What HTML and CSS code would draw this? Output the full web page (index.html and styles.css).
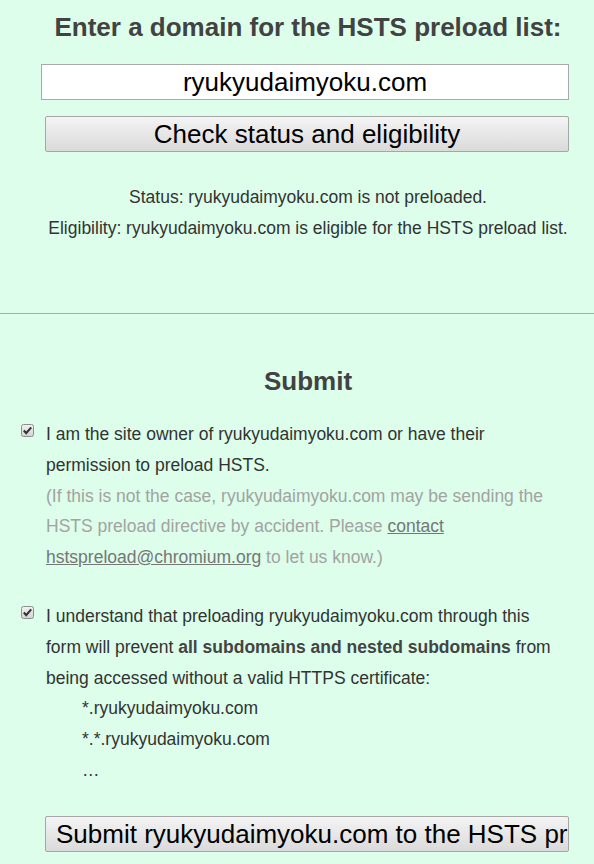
FILE: index.html
```html
<!DOCTYPE html>
<html lang="en">
<head>
<meta charset="utf-8">
<title>HSTS Preload List Submission</title>
<link rel="stylesheet" href="styles.css">
</head>
<body>
  <section class="check">
    <h1 class="title">Enter a domain for the HSTS preload list:</h1>
    <form class="check-form">
      <input class="domain-input" type="text" value="ryukyudaimyoku.com">
      <button class="btn btn-check" type="button">Check status and eligibility</button>
    </form>
    <div class="result">
      <div>Status: ryukyudaimyoku.com is not preloaded.</div>
      <div>Eligibility: ryukyudaimyoku.com is eligible for the HSTS preload list.</div>
    </div>
  </section>

  <hr class="divider">

  <section class="submit">
    <h2 class="title submit-title">Submit</h2>

    <label class="ack">
      <span class="checkbox" role="checkbox" aria-checked="true">
        <svg width="13" height="13" viewBox="0 0 13 13"><defs><linearGradient id="cb1" x1="0" y1="0" x2="0" y2="1"><stop offset="0" stop-color="#f2f2f2"/><stop offset="1" stop-color="#d2d2d2"/></linearGradient></defs><rect x="0.5" y="0.5" width="12" height="12" rx="2" fill="url(#cb1)" stroke="#8e8e8e"/><path d="M2.8 6.6 L5.2 9.1 L10.2 3.4" fill="none" stroke="#333" stroke-width="2.1"/></svg>
      </span>
      <span class="ack-text">I am the site owner of ryukyudaimyoku.com or have their permission to preload HSTS.<br><span class="muted">(If this is not the case, ryukyudaimyoku.com may be sending the HSTS preload directive by accident. Please <a href="#">contact hstspreload@chromium.org</a> to let us know.)</span></span>
    </label>

    <label class="ack ack-second">
      <span class="checkbox" role="checkbox" aria-checked="true">
        <svg width="13" height="13" viewBox="0 0 13 13"><defs><linearGradient id="cb2" x1="0" y1="0" x2="0" y2="1"><stop offset="0" stop-color="#f2f2f2"/><stop offset="1" stop-color="#d2d2d2"/></linearGradient></defs><rect x="0.5" y="0.5" width="12" height="12" rx="2" fill="url(#cb2)" stroke="#8e8e8e"/><path d="M2.8 6.6 L5.2 9.1 L10.2 3.4" fill="none" stroke="#333" stroke-width="2.1"/></svg>
      </span>
      <span class="ack-text">I understand that preloading ryukyudaimyoku.com through this form will prevent <strong class="strong">all subdomains and nested subdomains</strong> from being accessed without a valid HTTPS certificate:
        <span class="wildcards">
          <span class="wildcard">*.ryukyudaimyoku.com</span>
          <span class="wildcard">*.*.ryukyudaimyoku.com</span>
          <span class="wildcard">…</span>
        </span>
      </span>
    </label>

    <button class="btn btn-submit" type="button">Submit ryukyudaimyoku.com to the HSTS preload list</button>
  </section>
</body>
</html>
```
FILE: styles.css
```css
* {
  box-sizing: border-box;
}

html,
body {
  margin: 0;
  padding: 0;
}

body {
  width: 594px;
  overflow: hidden;
  background: #dcfeea;
  font-family: "Liberation Sans", Arial, sans-serif;
  font-size: 17.5px;
  line-height: 30.625px;
  color: #333;
}

.check {
  width: 572px;
  margin-left: 22px;
  padding-top: 12px;
  text-align: center;
}

.title {
  margin: 0;
  font-size: 26px;
  line-height: 30px;
  font-weight: bold;
  color: #424242;
}

.check-form {
  display: flex;
  flex-direction: column;
  align-items: flex-start;
  margin: 22px 0 0;
}

.domain-input {
  margin-left: 19px;
  width: 528px;
  height: 36px;
  padding: 0;
  border: 1px solid #a9a9a9;
  background: #fff;
  font-family: "Liberation Sans", Arial, sans-serif;
  font-size: 26px;
  color: #000;
  text-align: center;
  outline: none;
}

.btn {
  height: 36px;
  padding: 0;
  border: 1px solid #a6a6a6;
  border-radius: 2px;
  background: linear-gradient(#f4f4f4, #dadada);
  font-family: "Liberation Sans", Arial, sans-serif;
  font-size: 26px;
  line-height: 34px;
  color: #000;
}

.btn-check {
  margin: 16px 0 0 23px;
  width: 524px;
}

.result {
  margin-top: 30px;
}

.divider {
  margin: 70px 0 0;
  border: 0;
  height: 1px;
  background: #a9aea9;
}

.submit {
  padding: 52px 0 0 21px;
}

.submit-title {
  width: 574px;
  text-align: center;
}

.ack {
  display: flex;
  align-items: flex-start;
  margin-top: 23px;
}

.ack-second {
  margin-top: 29px;
}

.checkbox {
  flex: none;
  display: block;
  width: 13px;
  height: 13px;
  margin: 5px 12px 0 0;
}

.checkbox svg {
  display: block;
}

.ack-text {
  width: 518px;
}

.muted {
  color: #a3a3a3;
}

.muted a {
  color: #767676;
  text-decoration: underline;
}

.strong {
  font-weight: bold;
  color: #444;
}

.wildcards {
  display: block;
  padding-left: 36px;
}

.wildcard {
  display: block;
}

.btn-submit {
  display: block;
  margin: 31px 0 0 24px;
  width: 524px;
  padding-left: 10px;
  text-align: left;
  white-space: nowrap;
  overflow: hidden;
}
```
